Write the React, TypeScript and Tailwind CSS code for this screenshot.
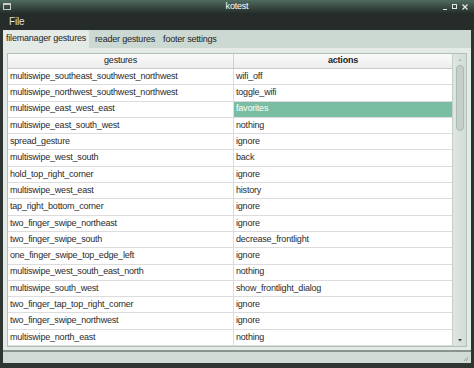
const rows: [string, string][] = [
  ['multiswipe_southeast_southwest_northwest', 'wifi_off'],
  ['multiswipe_northwest_southwest_northwest', 'toggle_wifi'],
  ['multiswipe_east_west_east', 'favorites'],
  ['multiswipe_east_south_west', 'nothing'],
  ['spread_gesture', 'ignore'],
  ['multiswipe_west_south', 'back'],
  ['hold_top_right_corner', 'ignore'],
  ['multiswipe_west_east', 'history'],
  ['tap_right_bottom_corner', 'ignore'],
  ['two_finger_swipe_northeast', 'ignore'],
  ['two_finger_swipe_south', 'decrease_frontlight'],
  ['one_finger_swipe_top_edge_left', 'ignore'],
  ['multiswipe_west_south_east_north', 'nothing'],
  ['multiswipe_south_west', 'show_frontlight_dialog'],
  ['two_finger_tap_top_right_corner', 'ignore'],
  ['two_finger_swipe_northwest', 'ignore'],
  ['multiswipe_north_east', 'nothing'],
];

const selectedRow = 2;

function TitleBar() {
  return (
    <div className="relative h-[13px] bg-gradient-to-b from-[#4f6b5f] to-[#27302c] flex items-center">
      <div className="ml-[3px] w-[8px] h-[7px] border border-[#c8cfcb] border-t-[2px]" />
      <div className="absolute inset-0 flex items-center justify-center text-[9px] text-white">kotest</div>
      <div className="ml-auto mr-[6px] flex items-center gap-[5px] text-[#e2e6e4]">
        <div className="w-[4px] h-[1px] bg-[#e2e6e4] mt-[5px]" />
        <div className="w-[5px] h-[5px] border border-[#e2e6e4]" />
        <svg width="6" height="6" viewBox="0 0 6 6">
          <path d="M0.5 0.5 L5.5 5.5 M5.5 0.5 L0.5 5.5" stroke="#e2e6e4" strokeWidth="1.3" />
        </svg>
      </div>
    </div>
  );
}

function Tabs() {
  return (
    <div className="h-[18px] flex items-end bg-[#ccd9d2]">
      <div className="h-[18px] px-[3px] flex items-center bg-[#e4eae6] rounded-tr-[2px]">
        filemanager gestures
      </div>
      <div className="h-[16px] pl-[6px] pr-[4px] flex items-center">reader gestures</div>
      <div className="h-[16px] px-[4px] flex items-center">footer settings</div>
    </div>
  );
}

function Scrollbar() {
  return (
    <div className="w-[14px] bg-gradient-to-r from-[#dfe6e2] to-[#d3ddd7] border-l border-[#c5cfca] flex flex-col items-center">
      <svg width="6" height="6" viewBox="0 0 6 6" className="mt-[3px]">
        <path d="M1 4 L3 1.5 L5 4 Z" fill="#b5bfba" />
      </svg>
      <div className="mt-[2px] w-[8px] h-[66px] rounded-[4px] bg-[#c4cfc9] border border-[#aebab4]" />
      <div className="flex-1" />
      <svg width="6" height="6" viewBox="0 0 6 6" className="mb-[3px]">
        <path d="M1 2 L3 4.5 L5 2 Z" fill="#3d4541" />
      </svg>
    </div>
  );
}

function Table() {
  return (
    <div className="h-[294px] mx-[4px] mt-[5px] flex border border-[#b3bfb9] bg-white">
      <div className="flex-1 flex flex-col">
        <div className="h-[15px] flex bg-gradient-to-b from-[#fbfbfb] to-[#ececec] border-b border-[#c9c9c9] text-[#222]">
          <div className="w-[226px] flex items-center justify-center border-r border-[#d0d0d0]">gestures</div>
          <div className="flex-1 flex items-center justify-center font-bold">actions</div>
        </div>
        <div className="flex-1 flex flex-col">
          {rows.map(([g, a], i) => (
            <div key={g} className="flex-1 flex border-b border-[#dcdcdc] text-[#2a2a2a]">
              <div className="w-[226px] flex items-center pl-[2px] border-r border-[#dcdcdc]">{g}</div>
              <div
                className={
                  i === selectedRow
                    ? 'flex-1 flex items-center pl-[2px] bg-[#79bda2] text-white'
                    : 'flex-1 flex items-center pl-[2px]'
                }
              >
                {a}
              </div>
            </div>
          ))}
        </div>
      </div>
      <Scrollbar />
    </div>
  );
}

export default function App() {
  return (
    <div
      className="w-[474px] h-[368px] bg-[#2f3532] flex flex-col overflow-hidden text-[9px] tracking-[-0.2px]"
      style={{ fontFamily: '"Liberation Sans", Arial, sans-serif' }}
    >
      <TitleBar />
      <div className="h-[17px] bg-[#262c29] flex items-center pl-[9px] text-[10px] text-[#dde2df]">File</div>
      <div className="flex-1 ml-[3px] mr-[3px] bg-[#d2ddd7] flex flex-col text-[#1e1e1e]">
        <Tabs />
        <div className="flex-1 bg-[#e4eae6]">
          <Table />
        </div>
        <div className="h-[2px] bg-[#8a948f]" />
        <div className="h-[11px] bg-[#d0dbd5] flex justify-end items-end pr-[2px] pb-[1px]">
          <svg width="6" height="6" viewBox="0 0 6 6">
            <path d="M5 1 L1 5 M5 3 L3 5" stroke="#9aa59f" strokeWidth="1" />
          </svg>
        </div>
      </div>
      <div className="h-[5px]" />
    </div>
  );
}
